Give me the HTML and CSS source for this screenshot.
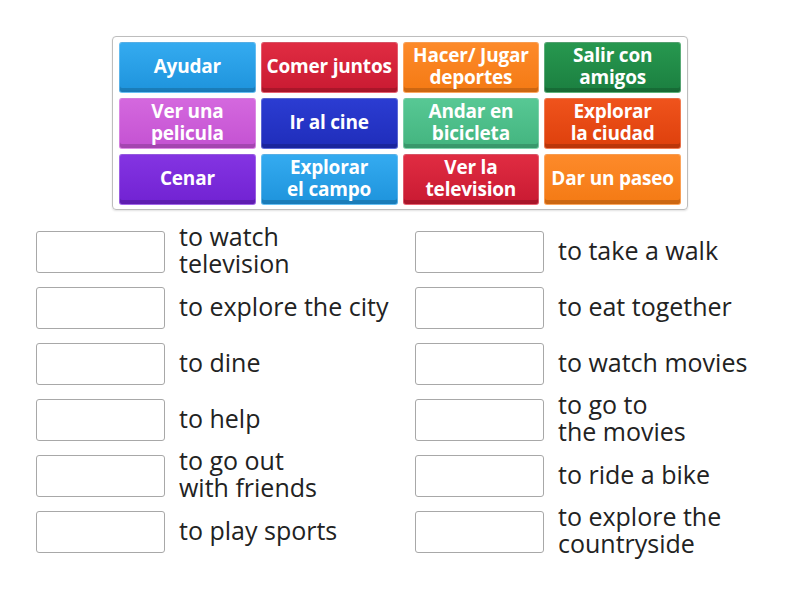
FILE: index.html
```html
<!DOCTYPE html>
<html>
<head>
<meta charset="utf-8">
<link rel="stylesheet" href="styles.css">
</head>
<body>
<div class="page">
  <div class="bank">
    <div class="tile c-blue">Ayudar</div>
    <div class="tile c-red">Comer juntos</div>
    <div class="tile c-orange">Hacer/ Jugar<br>deportes</div>
    <div class="tile c-green">Salir con<br>amigos</div>
    <div class="tile c-pink">Ver una<br>pelicula</div>
    <div class="tile c-navy">Ir al cine</div>
    <div class="tile c-teal">Andar en<br>bicicleta</div>
    <div class="tile c-redorange">Explorar<br>la ciudad</div>
    <div class="tile c-purple">Cenar</div>
    <div class="tile c-blue">Explorar<br>el campo</div>
    <div class="tile c-red">Ver la<br>television</div>
    <div class="tile c-orange">Dar un paseo</div>
  </div>
  <div class="targets">
    <div class="row"><div class="slot"></div><div class="label">to watch<br>television</div></div>
    <div class="row"><div class="slot"></div><div class="label">to take a walk</div></div>
    <div class="row"><div class="slot"></div><div class="label">to explore the city</div></div>
    <div class="row"><div class="slot"></div><div class="label">to eat together</div></div>
    <div class="row"><div class="slot"></div><div class="label">to dine</div></div>
    <div class="row"><div class="slot"></div><div class="label">to watch movies</div></div>
    <div class="row"><div class="slot"></div><div class="label">to help</div></div>
    <div class="row"><div class="slot"></div><div class="label">to go to<br>the movies</div></div>
    <div class="row"><div class="slot"></div><div class="label">to go out<br>with friends</div></div>
    <div class="row"><div class="slot"></div><div class="label">to ride a bike</div></div>
    <div class="row"><div class="slot"></div><div class="label">to play sports</div></div>
    <div class="row"><div class="slot"></div><div class="label">to explore the<br>countryside</div></div>
  </div>
</div>
</body>
</html>
```

FILE: styles.css
```css
* { box-sizing: border-box; }
html, body { margin: 0; padding: 0; background: #fff; }
body { font-family: "Open Sans", "Liberation Sans", sans-serif; }

.page {
  width: 800px;
  height: 600px;
  padding-top: 36px;
}

.bank {
  width: 576px;
  margin: 0 0 0 112px;
  border: 1px solid #bdbdbd;
  border-radius: 4px;
  padding: 5px 6px 4px 6px;
  display: grid;
  grid-template-columns: repeat(4, 1fr);
  column-gap: 5px;
  row-gap: 5px;
  box-shadow: 0 1px 2px rgba(0,0,0,0.12);
}

.tile {
  height: 51px;
  border-radius: 3px;
  color: #fff;
  font-weight: 700;
  font-size: 19px;
  line-height: 22px;
  text-align: center;
  display: flex;
  align-items: center;
  justify-content: center;
  border: 1px solid rgba(255,255,255,0.25);
  box-shadow: inset 0 -4px 0 rgba(0,0,0,0.16);
  padding-bottom: 3px;
  letter-spacing: -0.2px;
  white-space: nowrap;
}

.c-blue { background: linear-gradient(#34abf0, #1e93dc); }
.c-red { background: linear-gradient(#e02c42, #c91a32); }
.c-orange { background: linear-gradient(#fd8a2a, #f47a14); }
.c-green { background: linear-gradient(#27984f, #1b7f40); }
.c-pink { background: linear-gradient(#d468de, #c452d2); }
.c-navy { background: linear-gradient(#2b3cd2, #1f2dba); }
.c-teal { background: linear-gradient(#57c894, #43b47f); }
.c-redorange { background: linear-gradient(#ef531c, #de400c); }
.c-purple { background: linear-gradient(#8434e2, #7122d2); }

.targets {
  margin: 21px 0 0 36px;
  display: grid;
  grid-template-columns: 379px 379px;
  row-gap: 14px;
}

.row {
  display: flex;
  align-items: center;
  height: 42px;
}

.slot {
  width: 129px;
  height: 42px;
  border: 1px solid #a8a8a8;
  border-radius: 3px;
  background: #fff;
  flex: none;
}

.label {
  margin-left: 14px;
  font-size: 25px;
  line-height: 27px;
  color: #222;
  white-space: nowrap;
  padding-bottom: 4px;
}
```
